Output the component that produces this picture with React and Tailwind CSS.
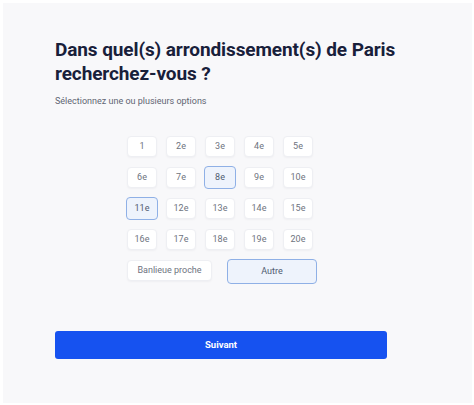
import React, { useState } from 'react';

const ARR = ['1', '2e', '3e', '4e', '5e', '6e', '7e', '8e', '9e', '10e', '11e', '12e', '13e', '14e', '15e', '16e', '17e', '18e', '19e', '20e'];

const App = () => {
  const [picked, setPicked] = useState(['8e', '11e', 'Autre']);

  const toggle = (v) =>
    setPicked((p) => (p.includes(v) ? p.filter((x) => x !== v) : [...p, v]));

  const base = 'flex items-center justify-center rounded-[4px] text-[9px] leading-none';
  const off = 'bg-white border border-[#eeeff3] text-[#6e7380] shadow-[0_1px_2px_rgba(16,24,40,0.04)]';
  const on = 'bg-[#eef3fc] border border-[#8fb0e6] text-[#4f5a70]';

  return (
    <div className="w-[474px] h-[405px] bg-white pt-[3px] pl-[3px] pr-[2px] pb-[2px]" style={{ fontFamily: 'Roboto, "Noto Sans", sans-serif' }}>
      <div className="h-[400px] bg-[#f8f8fa] pl-[52px] pt-[35px]">
        <div className="w-[332px]">
          <h1 className="text-[19px] leading-[23.5px] font-bold text-[#18203a] tracking-[-0.1px] whitespace-nowrap">
            Dans quel(s) arrondissement(s) de Paris
            <br />
            recherchez-vous ?
          </h1>
          <p className="mt-[9px] text-[9px] leading-[14px] text-[#5f6573]">
            Sélectionnez une ou plusieurs options
          </p>

          <div className="mt-[28px] ml-[72px] w-[190px]">
            <div className="grid grid-cols-[repeat(5,30px)] gap-x-[9px] gap-y-[10px]">
              {ARR.map((a) => {
                const sel = picked.includes(a);
                return (
                  <button
                    key={a}
                    onClick={() => toggle(a)}
                    className={`${base} ${sel ? on + ' h-[23px] -m-px' : off + ' h-[21px]'}`}
                  >
                    {a}
                  </button>
                );
              })}
            </div>
            <div className="mt-[9px] flex items-start gap-[15px]">
              <button
                onClick={() => toggle('Banlieue proche')}
                className={`${base} shrink-0 w-[85px] mt-px ${picked.includes('Banlieue proche') ? on + ' h-[23px]' : off + ' h-[21px]'}`}
              >
                Banlieue proche
              </button>
              <button
                onClick={() => toggle('Autre')}
                className={`${base} shrink-0 w-[90px] ${picked.includes('Autre') ? on + ' h-[25px]' : off + ' h-[21px]'}`}
              >
                Autre
              </button>
            </div>
          </div>

          <button className="mt-[47px] w-[332px] h-[28px] rounded-[3px] bg-[#1652f0] text-white text-[9.5px] font-bold flex items-center justify-center">
            Suivant
          </button>
        </div>
      </div>
    </div>
  );
};

export default App;
